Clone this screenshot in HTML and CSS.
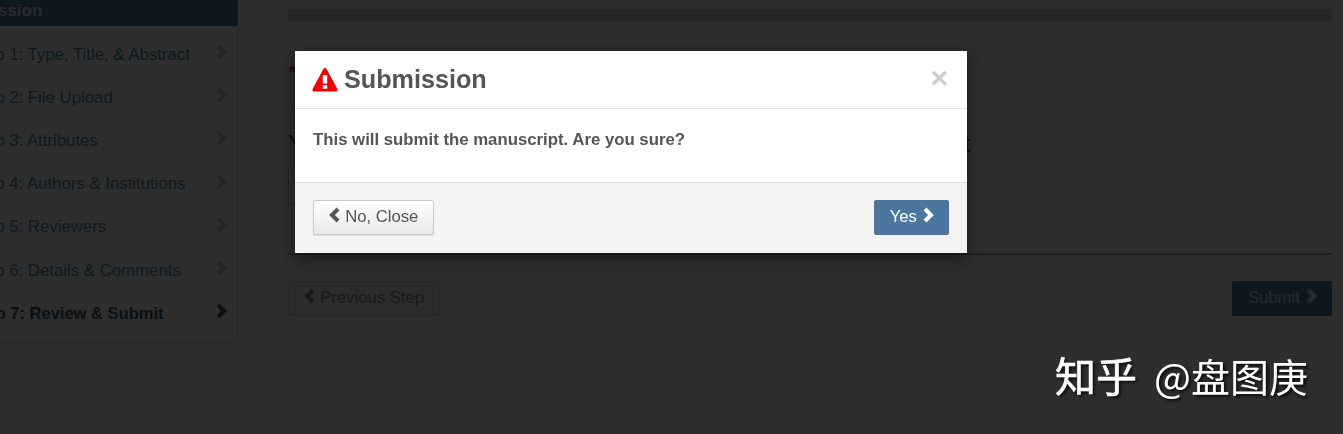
FILE: index.html
```html
<!DOCTYPE html>
<html lang="en">
<head>
  <meta charset="UTF-8">
  <meta name="viewport" content="width=device-width, initial-scale=1.0">
  <title>Submission</title>
  <link rel="stylesheet" href="styles.css">
</head>
<body>
  <svg class="defs" width="0" height="0">
    <symbol id="chev-right" viewBox="0 0 12 16"><path d="M3 2l6 6-6 6" fill="none" stroke="currentColor" stroke-width="4"/></symbol>
    <symbol id="chev-left" viewBox="0 0 12 16"><path d="M9 2L3 8l6 6" fill="none" stroke="currentColor" stroke-width="4"/></symbol>
  </svg>

  <div class="page">
    <aside class="sidebar">
      <div class="sidebar-title">Submission</div>
      <ul class="steps">
        <li><a>Step 1: Type, Title, &amp; Abstract</a><svg class="chev"><use href="#chev-right"/></svg></li>
        <li><a>Step 2: File Upload</a><svg class="chev"><use href="#chev-right"/></svg></li>
        <li><a>Step 3: Attributes</a><svg class="chev"><use href="#chev-right"/></svg></li>
        <li><a>Step 4: Authors &amp; Institutions</a><svg class="chev"><use href="#chev-right"/></svg></li>
        <li><a>Step 5: Reviewers</a><svg class="chev"><use href="#chev-right"/></svg></li>
        <li><a>Step 6: Details &amp; Comments</a><svg class="chev"><use href="#chev-right"/></svg></li>
        <li class="active"><a>Step 7: Review &amp; Submit</a><svg class="chev"><use href="#chev-right"/></svg></li>
      </ul>
    </aside>

    <main class="content">
      <div class="progress"></div>
      <div class="required">*</div>
      <h2 class="lead">You have reached the final step of your submission, now submit</h2>
      <div class="field"></div>
      <div class="actions">
        <button class="btn"><svg class="chev-sm"><use href="#chev-left"/></svg> Previous Step</button>
        <button class="btn btn-primary">Submit <svg class="chev-sm"><use href="#chev-right"/></svg></button>
      </div>
    </main>
  </div>

  <div class="backdrop"></div>

  <div class="modal">
    <div class="modal-header">
      <svg class="warn" viewBox="0 0 26 24">
        <path d="M13 0c.7 0 1.200.4 1.600 1l10.800 20c.6 1.200-.1 2.400-1.400 2.400H2C.7 23.400 0 22.200.6 21L11.400 1c.4-.6.900-1 1.600-1z" fill="#f00000"/>
        <rect x="10.800" y="7" width="4.400" height="8.500" fill="#fff"/>
        <rect x="10.800" y="17" width="4.400" height="3.800" fill="#fff"/>
      </svg>
      <h3 class="modal-title">Submission</h3>
      <span class="close">×</span>
    </div>
    <div class="modal-body">This will submit the manuscript. Are you sure?</div>
    <div class="modal-footer">
      <button class="btn btn-light"><svg class="chev-sm"><use href="#chev-left"/></svg> No, Close</button>
      <button class="btn btn-primary">Yes <svg class="chev-sm"><use href="#chev-right"/></svg></button>
    </div>
  </div>

  <div class="watermark"><b class="wm-brand">知乎</b><span class="wm-user">@盘图庚</span></div>
</body>
</html>
```

FILE: styles.css
```css
html, body {
  margin: 0;
  height: 434px;
  overflow: hidden;
}
body {
  font-family: "Liberation Sans", Arial, sans-serif;
  color: #333;
  background: #fff;
}
.defs {
  display: block;
  height: 0;
}
.page {
  display: flex;
  margin-left: -60px;
  margin-top: -14px;
}

/* sidebar */
.sidebar {
  width: 298px;
  flex: none;
}
.sidebar-title {
  height: 40px;
  padding: 10px 0 0 6px;
  box-sizing: border-box;
  background: #4a7fae;
  color: #d8e8f8;
  font-weight: bold;
  font-size: 17px;
  line-height: 30px;
}
.steps {
  list-style: none;
  margin: 0;
  padding: 7px 0;
  border: 1px solid #ddd;
  border-top: none;
  border-radius: 0 0 6px 6px;
}
.steps li {
  display: flex;
  justify-content: space-between;
  align-items: center;
  height: 43.2px;
  padding: 0 10px 0 29px;
  font-size: 16.8px;
  color: #4a8aad;
}
.steps li.active {
  font-weight: bold;
  font-size: 16.5px;
  color: #3f5870;
}
.chev {
  width: 12px;
  height: 16px;
  margin-top: -5px;
  color: #c4d4de;
}
.active .chev {
  color: #3f5870;
}

/* main column */
.content {
  width: 1044px;
  margin-left: 50px;
  flex: none;
}
.progress {
  height: 12px;
  margin-top: 23px;
  background: #d4d4d4;
}
.required {
  margin-top: 41px;
  height: 20px;
  font-size: 21px;
  line-height: 20px;
  color: #e00;
}
.lead {
  margin: 48px 0 0;
  font-size: 24.2px;
  font-weight: normal;
  line-height: 28px;
  white-space: nowrap;
}
.field {
  height: 36px;
  margin-top: 11px;
  width: 300px;
  border: 1px solid #ccc;
  box-sizing: border-box;
}
.actions {
  display: flex;
  justify-content: space-between;
  margin-top: 48px;
  padding-top: 26px;
  border-top: 2px solid #aaa;
}
.actions .btn {
  background: #f3f3f3;
  color: #888;
}
.actions .btn-primary {
  background: #4a7fae;
  border-color: #4a7fae;
  color: #d8e8f8;
}

/* buttons */
.btn {
  height: 35px;
  padding: 0 14.5px 2px;
  font: 16.7px "Liberation Sans", Arial, sans-serif;
  color: #555;
  background: #fff;
  border: 1px solid #ccc;
  border-radius: 2px;
}
.btn-light {
  background: linear-gradient(#fff, #e9e9e9);
  border-color: #c8c8c8;
  box-shadow: 0 1px 1px rgba(0, 0, 0, .08);
}
.btn-primary {
  background: #4b76a0;
  border-color: #4b76a0;
  color: #fff;
}
.chev-sm {
  width: 12px;
  height: 16px;
  vertical-align: -1px;
}

/* modal */
.backdrop {
  position: fixed;
  inset: 0;
  background: rgba(0, 0, 0, .82);
}
.modal {
  position: absolute;
  left: 295px;
  top: 51px;
  width: 672px;
  background: #fff;
  box-shadow: 0 5px 15px rgba(0, 0, 0, .5);
}
.modal-header {
  display: flex;
  align-items: center;
  height: 57px;
  padding: 0 19px 0 17px;
  border-bottom: 1px solid #e5e5e5;
}
.warn {
  width: 26px;
  height: 24px;
  margin-right: 6px;
}
.modal-title {
  margin: 0;
  flex: 1;
  font-size: 25.2px;
  line-height: 57px;
  color: #555;
}
.close {
  margin-top: -4px;
  font-size: 30px;
  font-weight: bold;
  line-height: 1;
  color: #ccc;
}
.modal-body {
  height: 73px;
  padding: 21px 18px 0;
  box-sizing: border-box;
  font-size: 16.77px;
  font-weight: bold;
  color: #555;
}
.modal-footer {
  display: flex;
  justify-content: space-between;
  height: 71px;
  padding: 17px 18px 0;
  box-sizing: border-box;
  background: #f4f4f4;
  border-top: 1px solid #ddd;
}

.watermark {
  position: absolute;
  left: 1055px;
  top: 347px;
  display: flex;
  align-items: baseline;
  font-family: "Noto Sans CJK SC", sans-serif;
  line-height: 54px;
  color: #fff;
  white-space: nowrap;
  text-shadow: 2px 2px 3px rgba(0, 0, 0, .8);
}
.wm-brand {
  font-size: 41px;
  font-weight: normal;
  -webkit-text-stroke: .6px #fff;
}
.wm-user {
  margin-left: 17px;
  font-size: 39px;
}
```
